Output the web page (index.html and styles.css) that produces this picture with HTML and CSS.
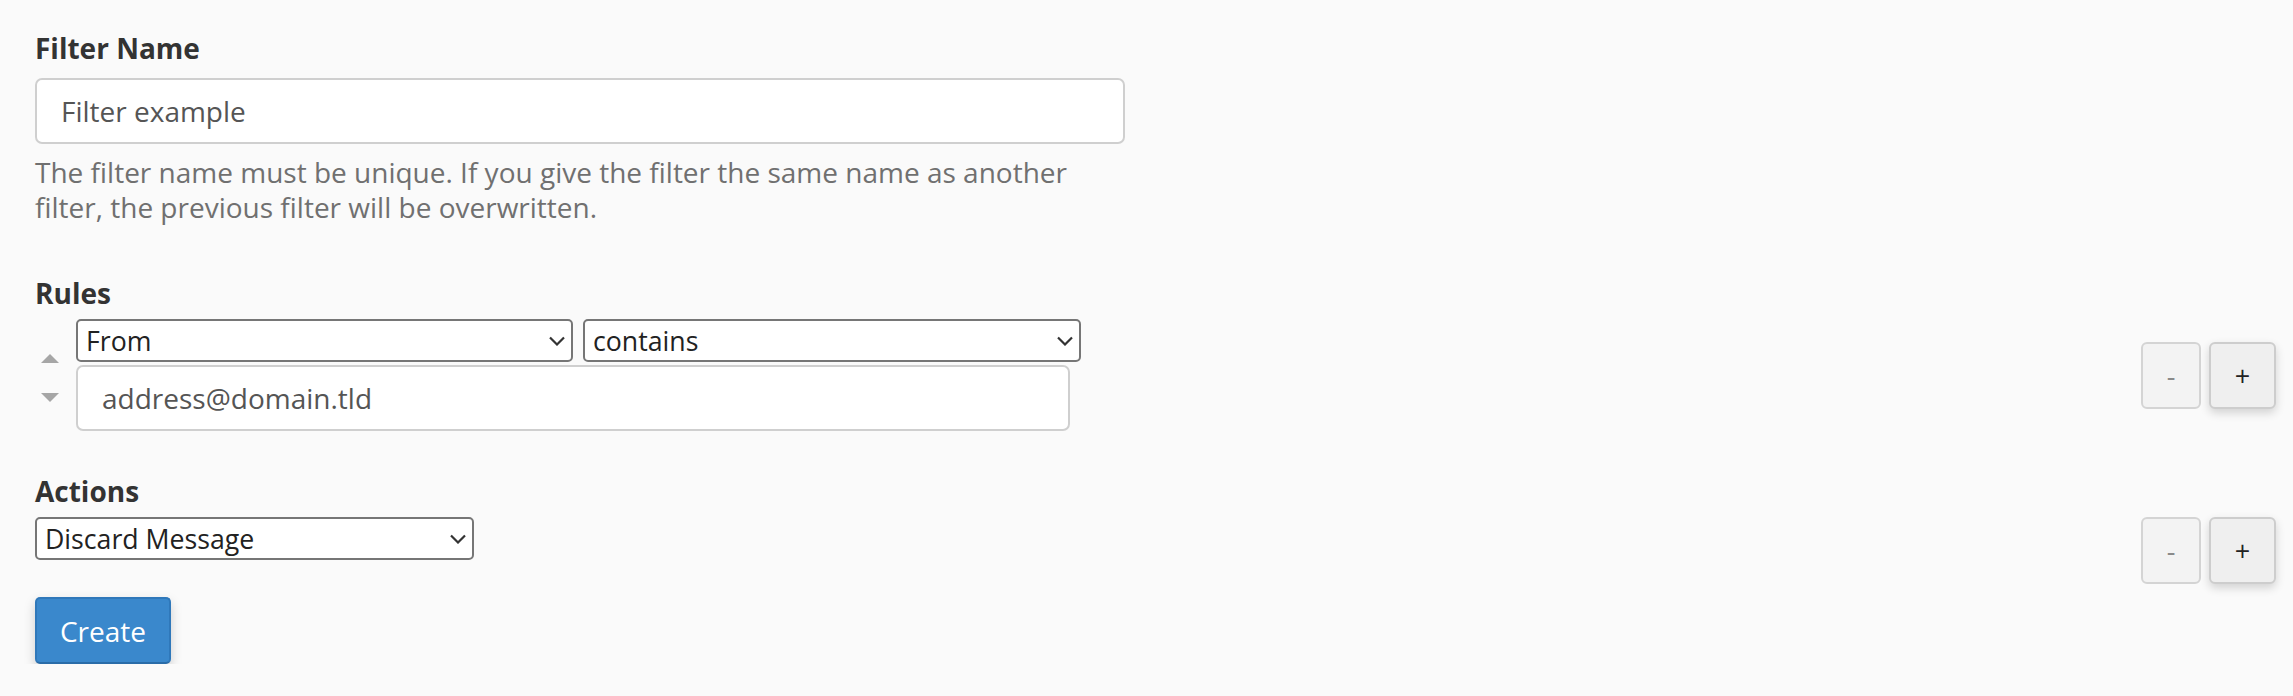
FILE: index.html
```html
<!DOCTYPE html>
<html lang="en">
<head>
<meta charset="utf-8">
<title>Create Filter</title>
<link rel="stylesheet" href="styles.css">
</head>
<body>
<form class="page">
  <div class="group">
    <label class="label label-name" for="filtername">Filter Name</label>
    <input id="filtername" class="text-input name-input" type="text" value="Filter example">
    <p class="help">The filter name must be unique. If you give the filter the same name as another filter, the previous filter will be overwritten.</p>
  </div>

  <div class="group rules">
    <label class="label label-rules">Rules</label>
    <div class="line rule-line">
      <div class="rule-main">
        <div class="order">
          <svg class="tri" width="18" height="9" viewBox="0 0 18 9"><polygon points="9,0 18,9 0,9" fill="#a6a6a6"/></svg>
          <svg class="tri" width="18" height="9" viewBox="0 0 18 9"><polygon points="0,0 18,0 9,9" fill="#a6a6a6"/></svg>
        </div>
        <div class="rule-fields">
          <div class="select-pair">
            <div class="select-wrap sel-part">
              <select class="select"><option>From</option></select>
              <svg class="chev" width="16" height="10" viewBox="0 0 16 10"><polyline points="1,1.5 8,8.5 15,1.5" fill="none" stroke="#333" stroke-width="2.2"/></svg>
            </div>
            <div class="select-wrap sel-match">
              <select class="select"><option>contains</option></select>
              <svg class="chev" width="16" height="10" viewBox="0 0 16 10"><polyline points="1,1.5 8,8.5 15,1.5" fill="none" stroke="#333" stroke-width="2.2"/></svg>
            </div>
          </div>
          <input class="text-input addr-input" type="text" value="address@domain.tld">
        </div>
      </div>
      <div class="pm">
        <button type="button" class="btn-minus">-</button>
        <button type="button" class="btn-plus">+</button>
      </div>
    </div>
  </div>

  <div class="group actions">
    <label class="label label-actions">Actions</label>
    <div class="line action-line">
      <div class="select-wrap sel-action">
        <select class="select"><option>Discard Message</option></select>
        <svg class="chev" width="16" height="10" viewBox="0 0 16 10"><polyline points="1,1.5 8,8.5 15,1.5" fill="none" stroke="#333" stroke-width="2.2"/></svg>
      </div>
      <div class="pm">
        <button type="button" class="btn-minus">-</button>
        <button type="button" class="btn-plus">+</button>
      </div>
    </div>
  </div>

  <button type="button" class="btn-create">Create</button>
</form>
</body>
</html>
```

FILE: styles.css
```css
html, body {
  margin: 0;
  padding: 0;
  background: #fafafa;
}

body {
  font-family: "Open Sans", "Liberation Sans", sans-serif;
  color: #333;
}

.page {
  padding: 28px 17px 0 35px;
  margin: 0;
}

.label {
  display: block;
  font-weight: 700;
  font-size: 28px;
  line-height: 40px;
  color: #333;
}

.label-name { margin-bottom: 10px; }
.label-rules { margin-top: 48px; margin-bottom: 6px; }
.label-actions { margin-top: 40px; margin-bottom: 6px; }

.text-input {
  display: block;
  box-sizing: border-box;
  height: 66px;
  border: 2px solid #cfcfcf;
  border-radius: 7px;
  background: #fff;
  padding: 0 24px;
  font-family: "Open Sans", "Liberation Sans", sans-serif;
  font-size: 28px;
  color: #555;
  outline: none;
  margin: 0;
}

.name-input { width: 1090px; }

.help {
  margin: 11px 0 0;
  width: 1075px;
  font-size: 28px;
  line-height: 35px;
  color: #707070;
}

.line {
  display: flex;
  justify-content: space-between;
}

.rule-line { align-items: center; }
.action-line { align-items: flex-start; }

.rule-main {
  display: flex;
  align-items: stretch;
}

.order {
  width: 41px;
  display: flex;
  flex-direction: column;
  align-items: flex-start;
  justify-content: center;
  gap: 30px;
  padding: 5px 0 0 6px;
  box-sizing: border-box;
}

.tri { display: block; }

.rule-fields {
  display: flex;
  flex-direction: column;
  gap: 3px;
}

.select-pair {
  display: flex;
  gap: 10px;
}

.select-wrap {
  position: relative;
  height: 43px;
}

.sel-part { width: 497px; }
.sel-match { width: 498px; }
.sel-action { width: 439px; }

.select {
  -webkit-appearance: none;
  appearance: none;
  display: block;
  box-sizing: border-box;
  width: 100%;
  height: 43px;
  margin: 0;
  border: 2px solid #767676;
  border-radius: 5px;
  background: #fff;
  padding: 0 30px 0 8px;
  font-family: "Open Sans", "Liberation Sans", sans-serif;
  font-size: 26.7px;
  color: #222;
  outline: none;
}

.chev {
  position: absolute;
  right: 8px;
  top: 17px;
  pointer-events: none;
}

.addr-input { width: 994px; height: 66px; }

.pm {
  display: flex;
  gap: 8px;
}

.btn-minus,
.btn-plus {
  box-sizing: border-box;
  height: 67px;
  margin: 0;
  padding: 0;
  border-radius: 6px;
  font-family: "Open Sans", "Liberation Sans", sans-serif;
  font-size: 27px;
  cursor: pointer;
}

.btn-minus {
  width: 60px;
  background: #f3f3f3;
  border: 2px solid #d4d4d4;
  color: #8a8a8a;
}

.btn-plus {
  width: 67px;
  background: #efefef;
  border: 2px solid #cdcdcd;
  color: #222;
  box-shadow: 0 4px 10px rgba(0, 0, 0, 0.16);
}

.btn-create {
  display: block;
  margin-top: 13px;
  box-sizing: border-box;
  width: 136px;
  height: 67px;
  padding: 0;
  background: #3a88cc;
  border: 2px solid #2f78ba;
  border-bottom-color: #2a6ca8;
  border-radius: 5px;
  color: #fff;
  font-family: "Open Sans", "Liberation Sans", sans-serif;
  font-size: 28px;
  box-shadow: 0 5px 12px rgba(0, 0, 0, 0.18);
  cursor: pointer;
}
```
